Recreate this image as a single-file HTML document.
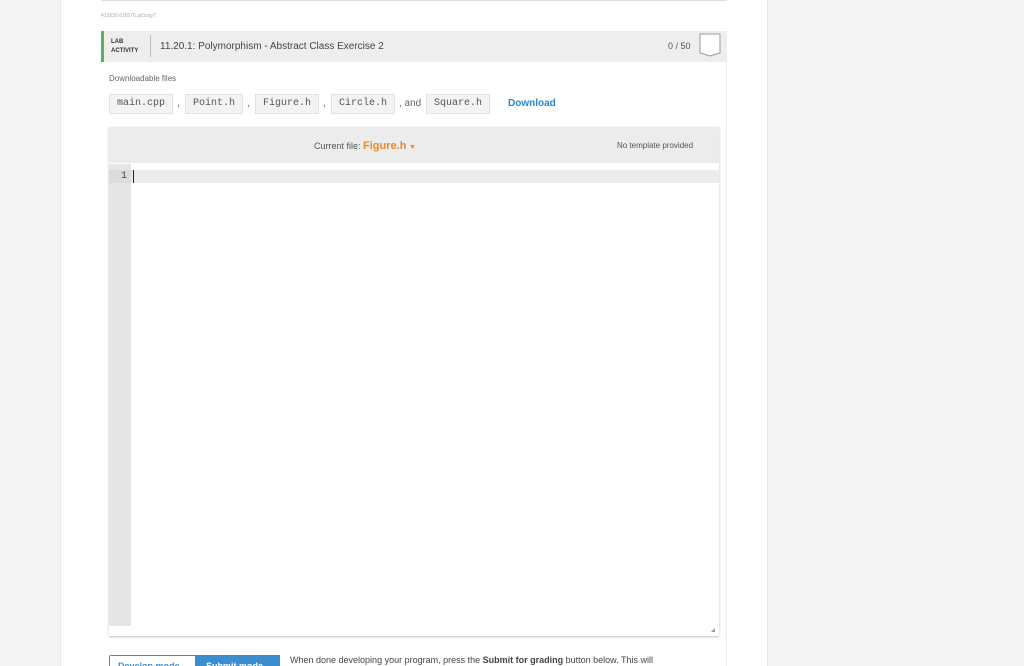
<!DOCTYPE html>
<html style="width:1024px;height:666px;overflow:hidden"><head><style>
*{box-sizing:border-box;margin:0;padding:0}
body{width:1024px;height:666px;overflow:hidden;background:#f4f4f4;font-family:"Liberation Sans",sans-serif;position:relative}
.col{position:absolute;left:60px;top:0;width:708px;height:666px;background:#fff;border-left:1px solid #e6e6e6;border-right:1px solid #e6e6e6}
.abs{position:absolute}
.code{font-family:"Liberation Mono",monospace;font-size:10px;color:#555;background:#f3f3f3;border:1px solid #e2e2e2;height:20px;line-height:18px;padding:0 7px;top:94px}
.sep{font-size:10px;color:#666;top:98px}
</style></head><body>
<div class="col"></div>
<div class="abs" style="left:101px;top:0;width:626px;height:1px;background:#ddd"></div>
<div class="abs" style="left:101px;top:13px;font-size:5px;color:#aaa">413530.616576.qx3zqy7</div>
<div class="abs" style="left:101px;top:31px;width:626px;height:31px;background:#eeeeee;border-left:3px solid #5aae5a"></div>
<div class="abs" style="left:111px;top:38px;font-size:6px;font-weight:bold;color:#333;line-height:9px">LAB<br>ACTIVITY</div>
<div class="abs" style="left:150px;top:35px;width:1px;height:22px;background:#bbb"></div>
<div class="abs" style="left:160px;top:41px;font-size:10px;color:#444">11.20.1: Polymorphism - Abstract Class Exercise 2</div>
<div class="abs" style="left:668px;top:41px;font-size:9px;color:#555">0 / 50</div>
<svg class="abs" style="left:699px;top:33px" width="23" height="25"><path d="M1 1H21V20L11 23L1 20Z" fill="#fff" stroke="#999"/></svg>
<div class="abs" style="left:726px;top:62px;width:1px;height:604px;background:#eee"></div>
<div class="abs" style="left:109px;top:74px;font-size:8px;color:#666">Downloadable files</div>
<div class="abs code" style="left:109px">main.cpp</div>
<div class="abs sep" style="left:177px">,</div>
<div class="abs code" style="left:185px">Point.h</div>
<div class="abs sep" style="left:247px">,</div>
<div class="abs code" style="left:255px">Figure.h</div>
<div class="abs sep" style="left:323px">,</div>
<div class="abs code" style="left:331px">Circle.h</div>
<div class="abs sep" style="left:399px">, and</div>
<div class="abs code" style="left:426px">Square.h</div>
<div class="abs" style="left:508px;top:98px;font-size:10px;font-weight:bold;color:#2a84d0">Download</div>
<div class="abs" style="left:109px;top:127px;width:610px;height:509px;background:#fff;box-shadow:0 1px 2px rgba(0,0,0,.25)"></div>
<div class="abs" style="left:109px;top:127px;width:610px;height:36px;background:#ececec"></div>
<div class="abs" style="left:314px;top:140px;font-size:9px;color:#555">Current file: <span style="color:#e98a2e;font-weight:bold;font-size:11px">Figure.h</span> <span style="color:#e98a2e;font-size:7px">▼</span></div>
<div class="abs" style="left:617px;top:141px;font-size:8px;color:#555">No template provided</div>
<div class="abs" style="left:109px;top:164px;width:22px;height:462px;background:#e6e6e6"></div>
<div class="abs" style="left:131px;top:170px;width:588px;height:13px;background:#ececec"></div>
<div class="abs" style="left:109px;top:170px;width:22px;height:13px;background:#dcdcdc"></div>
<div class="abs" style="left:121px;top:171px;font-family:'Liberation Mono',monospace;font-size:10px;color:#444">1</div>
<div class="abs" style="left:133px;top:170px;width:1px;height:13px;background:#222"></div>
<div class="abs" style="left:711px;top:628px;width:0;height:0;border-left:4px solid transparent;border-bottom:4px solid #999"></div>
<div class="abs" style="left:109px;top:655px;width:171px;height:20px;border:1px solid #3c8ed0;border-radius:2px;background:#fff"></div>
<div class="abs" style="left:195px;top:655px;width:85px;height:20px;background:#3c8ed0"></div>
<div class="abs" style="left:118px;top:661px;font-size:9px;font-weight:bold;color:#3c8ed0">Develop mode</div>
<div class="abs" style="left:206px;top:661px;font-size:9px;font-weight:bold;color:#fff">Submit mode</div>
<div class="abs" style="left:290px;top:655px;font-size:9px;color:#444">When done developing your program, press the <b>Submit for grading</b> button below. This will</div>
</body></html>
